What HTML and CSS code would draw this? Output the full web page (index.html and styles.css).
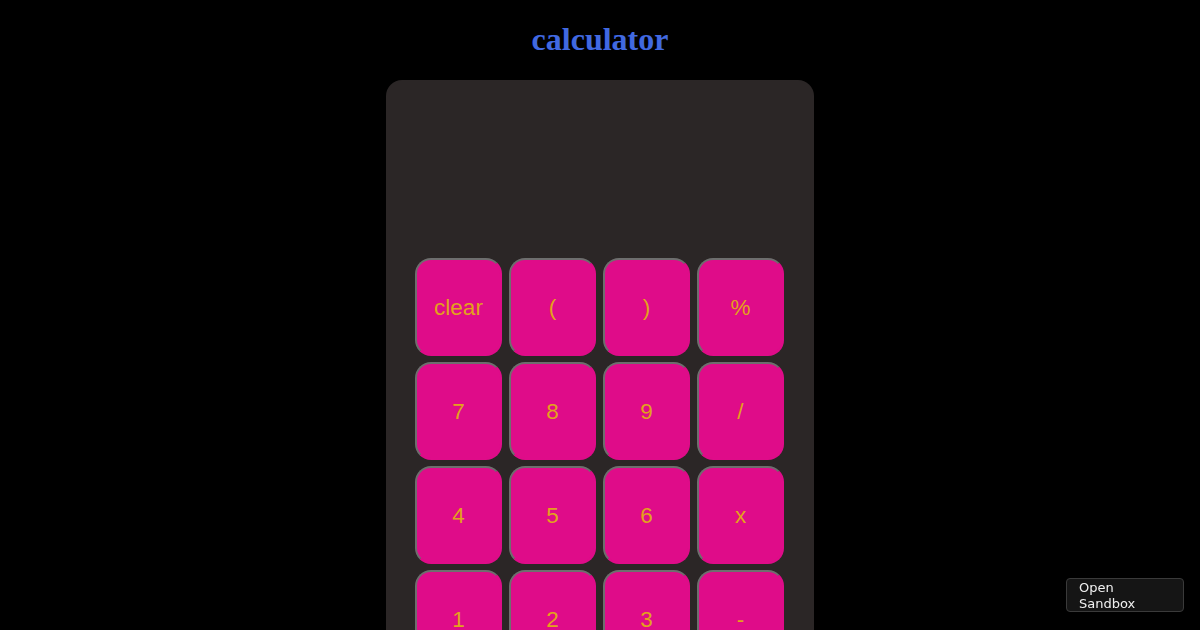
FILE: index.html
```html
<!DOCTYPE html>
<html>
<head>
<meta charset="utf-8">
<link rel="stylesheet" href="styles.css">
</head>
<body>
<h1 class="title">calculator</h1>
<div class="calc">
  <div class="display"></div>
  <div class="keys">
    <button class="key">clear</button>
    <button class="key">(</button>
    <button class="key">)</button>
    <button class="key">%</button>
    <button class="key">7</button>
    <button class="key">8</button>
    <button class="key">9</button>
    <button class="key">/</button>
    <button class="key">4</button>
    <button class="key">5</button>
    <button class="key">6</button>
    <button class="key">x</button>
    <button class="key">1</button>
    <button class="key">2</button>
    <button class="key">3</button>
    <button class="key">-</button>
    <button class="key">0</button>
    <button class="key">.</button>
    <button class="key">=</button>
    <button class="key">+</button>
  </div>
</div>
<div class="sandbox">Open<br>Sandbox</div>
</body>
</html>
```
FILE: styles.css
```css
html, body {
  background: #000;
}
body {
  margin: 0 8px;
  padding-top: 0.1px;
}
.title {
  font-family: "Liberation Serif", "Times New Roman", serif;
  font-size: 32px;
  font-weight: bold;
  color: #4169e1;
  text-align: center;
  margin: 21.3px 0 21.44px;
}
.calc {
  width: 428px;
  margin: 0 auto;
  background: #2b2626;
  border-radius: 16px;
  padding: 0 29px 29px;
  box-sizing: border-box;
}
.display {
  height: 178px;
}
.keys {
  display: grid;
  grid-template-columns: repeat(4, 87px);
  grid-auto-rows: 98px;
  column-gap: 7px;
  row-gap: 6px;
}
.key {
  box-sizing: border-box;
  background: #df0c89;
  color: #e3a21c;
  font-family: "Liberation Sans", Arial, sans-serif;
  font-size: 22.5px;
  border-style: solid;
  border-width: 2px;
  border-color: #6e6e6e #df0c89 #df0c89 #6e6e6e;
  border-radius: 16px;
  padding: 2px 0 0;
}
.sandbox {
  position: fixed;
  right: 16px;
  bottom: 18px;
  width: 118px;
  height: 34px;
  box-sizing: border-box;
  background: #151515;
  border: 1px solid #3a3a3a;
  border-radius: 4px;
  color: #f0f0f0;
  font-family: "DejaVu Sans", sans-serif;
  font-size: 13px;
  line-height: 16px;
  padding: 1px 12px;
}
```
